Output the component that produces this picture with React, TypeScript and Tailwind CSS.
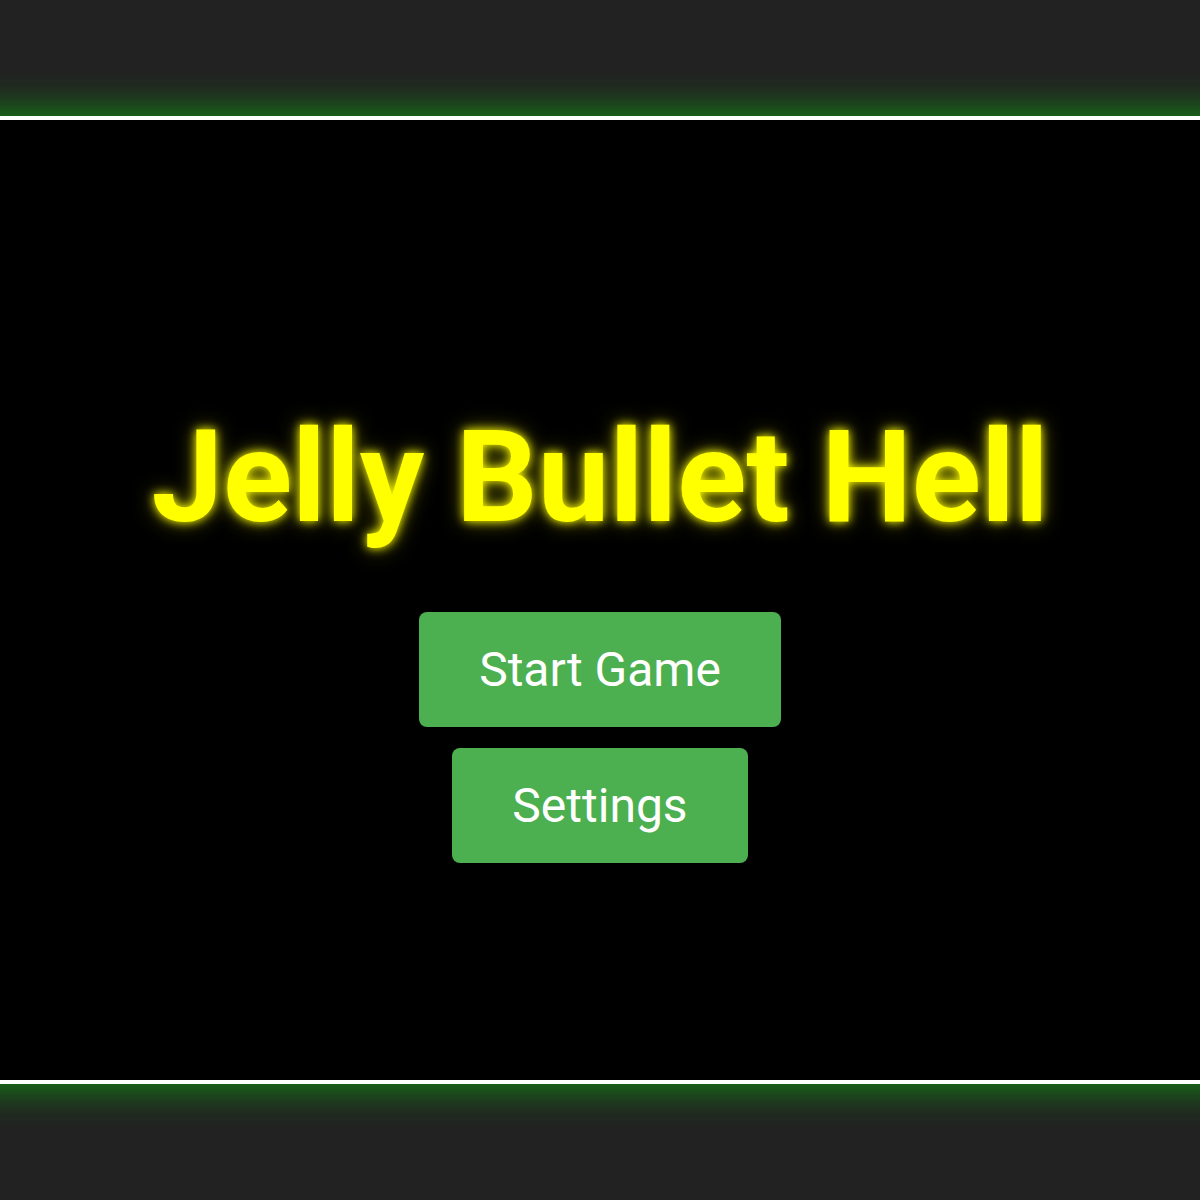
import React from 'react';

const App: React.FC = () => {
  return (
    <div
      className="min-h-screen w-full bg-[#222222] flex items-center justify-center overflow-hidden"
      style={{ fontFamily: 'Roboto, "Liberation Sans", sans-serif' }}
    >
      <div className="shrink-0 w-[1320px] h-[968px] bg-black border-4 border-white shadow-[0_0_40px_rgba(0,255,0,0.55)] flex flex-col items-center pt-[282px]">
        <h1 className="text-[128px] leading-[150px] font-bold text-[#ffff00] [text-shadow:0_0_10px_#ffff00,0_0_20px_rgba(255,255,0,0.5)] m-0">
          Jelly Bullet Hell
        </h1>
        <div className="flex flex-col items-center gap-[21px] mt-[60px]">
          <button className="h-[115px] px-[60px] bg-[#4caf50] text-white text-[48px] rounded-lg">
            Start Game
          </button>
          <button className="h-[115px] px-[60px] bg-[#4caf50] text-white text-[48px] rounded-lg">
            Settings
          </button>
        </div>
      </div>
    </div>
  );
};

export default App;
